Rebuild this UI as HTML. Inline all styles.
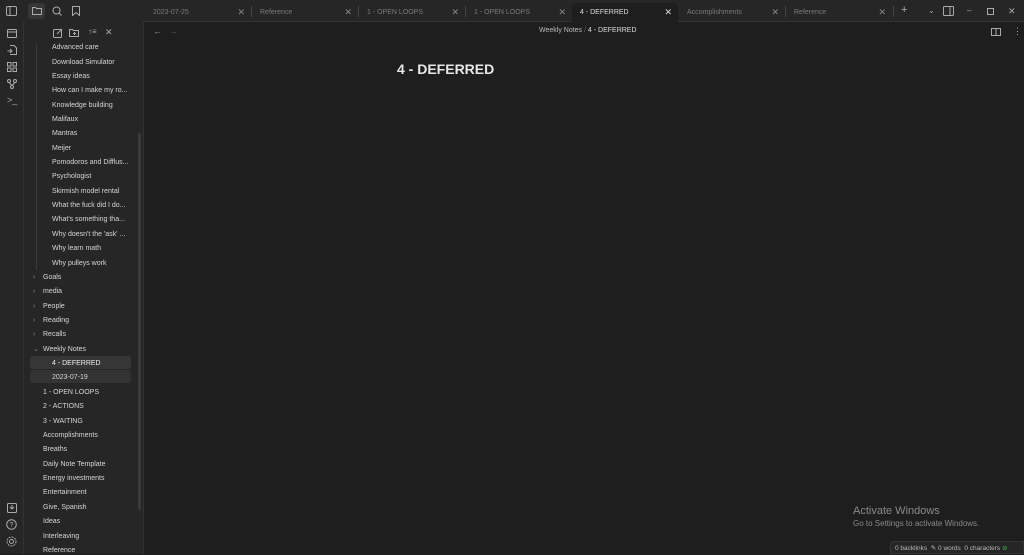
<!DOCTYPE html><html><head><style>
*{margin:0;padding:0;box-sizing:border-box}
body{width:1024px;height:554px;background:#1e1e1e;font-family:"Liberation Sans",sans-serif;overflow:hidden;position:relative;color:#dadada}
.abs{position:absolute}
#rib{left:0;top:0;width:24px;height:554px;background:#262626;border-right:1px solid #333}
#side{left:24px;top:0;width:120px;height:554px;background:#262626;border-right:1px solid #333}
#tabs{left:144px;top:0;width:880px;height:22px;background:#262626;border-bottom:1px solid #333}
.t{position:absolute;top:0;height:22px;font-size:7px;line-height:25px;color:#7a7a7a;padding-left:9px}
.t .x{position:absolute;right:6px;top:0;font-size:9px;color:#888}
.sep{position:absolute;top:6px;width:1px;height:11px;background:#444}
.f{position:absolute;font-size:7px;color:#d6d6d6;white-space:nowrap;margin-top:2px}
.ic{position:absolute;stroke:#aaa;fill:none;stroke-width:1}
</style></head><body>
<div id="rib" class="abs"></div>
<div id="side" class="abs"></div>
<div class="abs" style="left:0;top:0;width:144px;height:22px;background:#262626"></div>
<div class="abs" style="left:28px;top:3px;width:17px;height:16px;background:#363636;border-radius:3px"></div>
<svg class="ic" style="left:6px;top:6px" width="11" height="10"><rect x=".5" y=".5" width="10" height="9" rx="1.5"/><line x1="4" y1="1" x2="4" y2="9"/></svg>
<svg class="ic" style="left:32px;top:6px" width="10" height="9"><path d="M.5 1.5h3l1 1h5v6h-9z"/></svg>
<svg class="ic" style="left:52px;top:6px" width="10" height="10"><circle cx="4.5" cy="4.5" r="3.5"/><line x1="7" y1="7" x2="9.5" y2="9.5"/></svg>
<svg class="ic" style="left:72px;top:6px" width="8" height="10"><path d="M.5.5h7v9l-3.5-3-3.5 3z"/></svg>
<svg class="ic" style="left:7px;top:28px" width="10" height="10"><rect x=".5" y="1.5" width="9" height="8" rx="1"/><line x1="0" y1="4" x2="10" y2="4"/></svg>
<svg class="ic" style="left:7px;top:45px" width="10" height="10"><path d="M3 .5h4l2.5 2.5v6.5h-6.5M.5 6h5M3 4l2 2-2 2"/></svg>
<svg class="ic" style="left:7px;top:62px" width="10" height="10"><rect x=".5" y=".5" width="3.5" height="3.5"/><rect x="6" y=".5" width="3.5" height="3.5"/><rect x=".5" y="6" width="3.5" height="3.5"/><rect x="6" y="6" width="3.5" height="3.5"/></svg>
<svg class="ic" style="left:7px;top:79px" width="10" height="10"><circle cx="2" cy="2" r="1.5"/><circle cx="8" cy="2" r="1.5"/><circle cx="5" cy="8" r="1.5"/><path d="M2 3.5l3 3M8 3.5l-3 3"/></svg>
<div class="abs" style="left:7px;top:95px;font-size:9px;color:#aaa">&gt;_</div>
<svg class="ic" style="left:7px;top:503px" width="10" height="10"><rect x=".5" y=".5" width="9" height="9" rx="1"/><path d="M3 4l2 2 2-2M5 2v4"/></svg>
<svg class="ic" style="left:6px;top:519px" width="11" height="11"><circle cx="5.5" cy="5.5" r="4.8"/><text x="3.5" y="8" font-size="7" fill="#aaa" stroke="none">?</text></svg>
<svg class="ic" style="left:6px;top:536px" width="11" height="11"><circle cx="5.5" cy="5.5" r="2"/><circle cx="5.5" cy="5.5" r="4.5" stroke-dasharray="2 1"/></svg>
<svg class="ic" style="left:53px;top:28px" width="10" height="10"><rect x=".5" y="1.5" width="8" height="8" rx="1"/><path d="M4 6l5-5"/></svg>
<svg class="ic" style="left:69px;top:28px" width="11" height="10"><path d="M.5 1.5h3l1 1h5v6h-9zM5.5 4v3M4 5.5h3"/></svg>
<div class="abs" style="left:88px;top:27px;font-size:8px;color:#aaa">↑≡</div>
<div class="abs" style="left:105px;top:27px;font-size:9px;color:#aaa">✕</div>
<div class="abs" style="left:36px;top:44px;width:1px;height:226px;background:#3a3a3a"></div>
<div class="abs" style="left:138px;top:133px;width:3px;height:377px;background:#3a3a3a;border-radius:2px"></div>
<div class="abs" style="left:30px;top:356px;width:101px;height:13px;background:#363636;border-radius:3px"></div>
<div class="abs" style="left:30px;top:370px;width:101px;height:13px;background:#333;border-radius:3px"></div>
<div class="f" style="left:52px;top:42px">Advanced care</div>
<div class="f" style="left:52px;top:57px">Download Simulator</div>
<div class="f" style="left:52px;top:71px">Essay ideas</div>
<div class="f" style="left:52px;top:85px">How can I make my ro...</div>
<div class="f" style="left:52px;top:100px">Knowledge building</div>
<div class="f" style="left:52px;top:114px">Malifaux</div>
<div class="f" style="left:52px;top:128px">Mantras</div>
<div class="f" style="left:52px;top:143px">Meijer</div>
<div class="f" style="left:52px;top:157px">Pomodoros and Difflus...</div>
<div class="f" style="left:52px;top:171px">Psychologist</div>
<div class="f" style="left:52px;top:186px">Skirmish model rental</div>
<div class="f" style="left:52px;top:200px">What the fuck did I do...</div>
<div class="f" style="left:52px;top:214px">What's something tha...</div>
<div class="f" style="left:52px;top:229px">Why doesn't the 'ask' ...</div>
<div class="f" style="left:52px;top:243px">Why learn math</div>
<div class="f" style="left:52px;top:258px">Why pulleys work</div>
<div class="f" style="left:33px;top:272px;color:#888">›</div><div class="f" style="left:43px;top:272px">Goals</div>
<div class="f" style="left:33px;top:286px;color:#888">›</div><div class="f" style="left:43px;top:286px">media</div>
<div class="f" style="left:33px;top:301px;color:#888">›</div><div class="f" style="left:43px;top:301px">People</div>
<div class="f" style="left:33px;top:315px;color:#888">›</div><div class="f" style="left:43px;top:315px">Reading</div>
<div class="f" style="left:33px;top:329px;color:#888">›</div><div class="f" style="left:43px;top:329px">Recalls</div>
<div class="f" style="left:33px;top:343px;color:#888">⌄</div><div class="f" style="left:43px;top:344px">Weekly Notes</div>
<div class="f" style="left:52px;top:358px;color:#eee">4 - DEFERRED</div>
<div class="f" style="left:52px;top:372px">2023-07-19</div>
<div class="f" style="left:43px;top:387px">1 - OPEN LOOPS</div>
<div class="f" style="left:43px;top:401px">2 - ACTIONS</div>
<div class="f" style="left:43px;top:416px">3 - WAITING</div>
<div class="f" style="left:43px;top:430px">Accomplishments</div>
<div class="f" style="left:43px;top:444px">Breaths</div>
<div class="f" style="left:43px;top:459px">Daily Note Template</div>
<div class="f" style="left:43px;top:473px">Energy investments</div>
<div class="f" style="left:43px;top:487px">Entertainment</div>
<div class="f" style="left:43px;top:502px">Give, Spanish</div>
<div class="f" style="left:43px;top:516px">Ideas</div>
<div class="f" style="left:43px;top:531px">Interleaving</div>
<div class="f" style="left:43px;top:545px">Reference</div>
<div id="tabs" class="abs">
<div class="t" style="left:0;width:107px">2023-07-25<span class="x">✕</span></div><div class="sep" style="left:107px"></div>
<div class="t" style="left:107px;width:107px">Reference<span class="x">✕</span></div><div class="sep" style="left:214px"></div>
<div class="t" style="left:214px;width:107px">1 - OPEN LOOPS<span class="x">✕</span></div><div class="sep" style="left:321px"></div>
<div class="t" style="left:321px;width:107px">1 - OPEN LOOPS<span class="x">✕</span></div>
<div class="t" style="left:428px;width:106px;top:3px;height:20px;line-height:19px;background:#1e1e1e;border-radius:4px 4px 0 0;color:#ddd;padding-left:8px">4 - DEFERRED<span class="x" style="color:#ddd">✕</span></div>
<div class="t" style="left:534px;width:107px">Accomplishments<span class="x">✕</span></div><div class="sep" style="left:641px"></div>
<div class="t" style="left:641px;width:107px">Reference<span class="x">✕</span></div><div class="sep" style="left:749px"></div>
<div class="abs" style="left:757px;top:4px;font-size:11px;color:#aaa">+</div>
<div class="abs" style="left:784px;top:6px;font-size:8px;color:#aaa">⌄</div>
<svg class="ic" style="left:799px;top:6px" width="11" height="10"><rect x=".5" y=".5" width="10" height="9" rx="1"/><line x1="7" y1="1" x2="7" y2="9"/></svg>
<div class="abs" style="left:823px;top:6px;font-size:8px;color:#aaa">–</div>
<svg class="ic" style="left:843px;top:8px" width="7" height="7"><rect x=".5" y=".5" width="6" height="6"/></svg>
<div class="abs" style="left:864px;top:6px;font-size:9px;color:#aaa">✕</div>
</div>
<div class="abs" style="left:153px;top:26px;font-size:9px;color:#999">←</div>
<div class="abs" style="left:169px;top:26px;font-size:9px;color:#555">→</div>
<div class="abs" style="left:539px;top:27px;font-size:7px;color:#bbb">Weekly Notes <span style="color:#666">/</span> <span style="color:#ddd">4 - DEFERRED</span></div>
<svg class="ic" style="left:991px;top:28px" width="10" height="8"><path d="M.5 .5h4l.5 1 .5-1h4v7h-4l-.5.5-.5-.5h-4zM5 1.5v6"/></svg>
<div class="abs" style="left:1013px;top:26px;font-size:9px;color:#aaa">⋮</div>
<div class="abs" style="left:397px;top:61px;font-size:14px;font-weight:bold;color:#e8e8e8">4 - DEFERRED</div>
<div class="abs" style="left:853px;top:505px;font-size:11px;color:#8a8a8a">Activate Windows</div>
<div class="abs" style="left:853px;top:519px;font-size:8px;color:#8a8a8a">Go to Settings to activate Windows.</div>
<div class="abs" style="left:890px;top:541px;width:134px;height:13px;background:#262626;border:1px solid #333;border-radius:4px 0 0 0;font-size:6.5px;line-height:13px;color:#bbb;padding-left:4px;white-space:nowrap">0 backlinks &nbsp;✎ 0 words &nbsp;0 characters <span style="color:#3fb950">⊘</span></div>
</body></html>
